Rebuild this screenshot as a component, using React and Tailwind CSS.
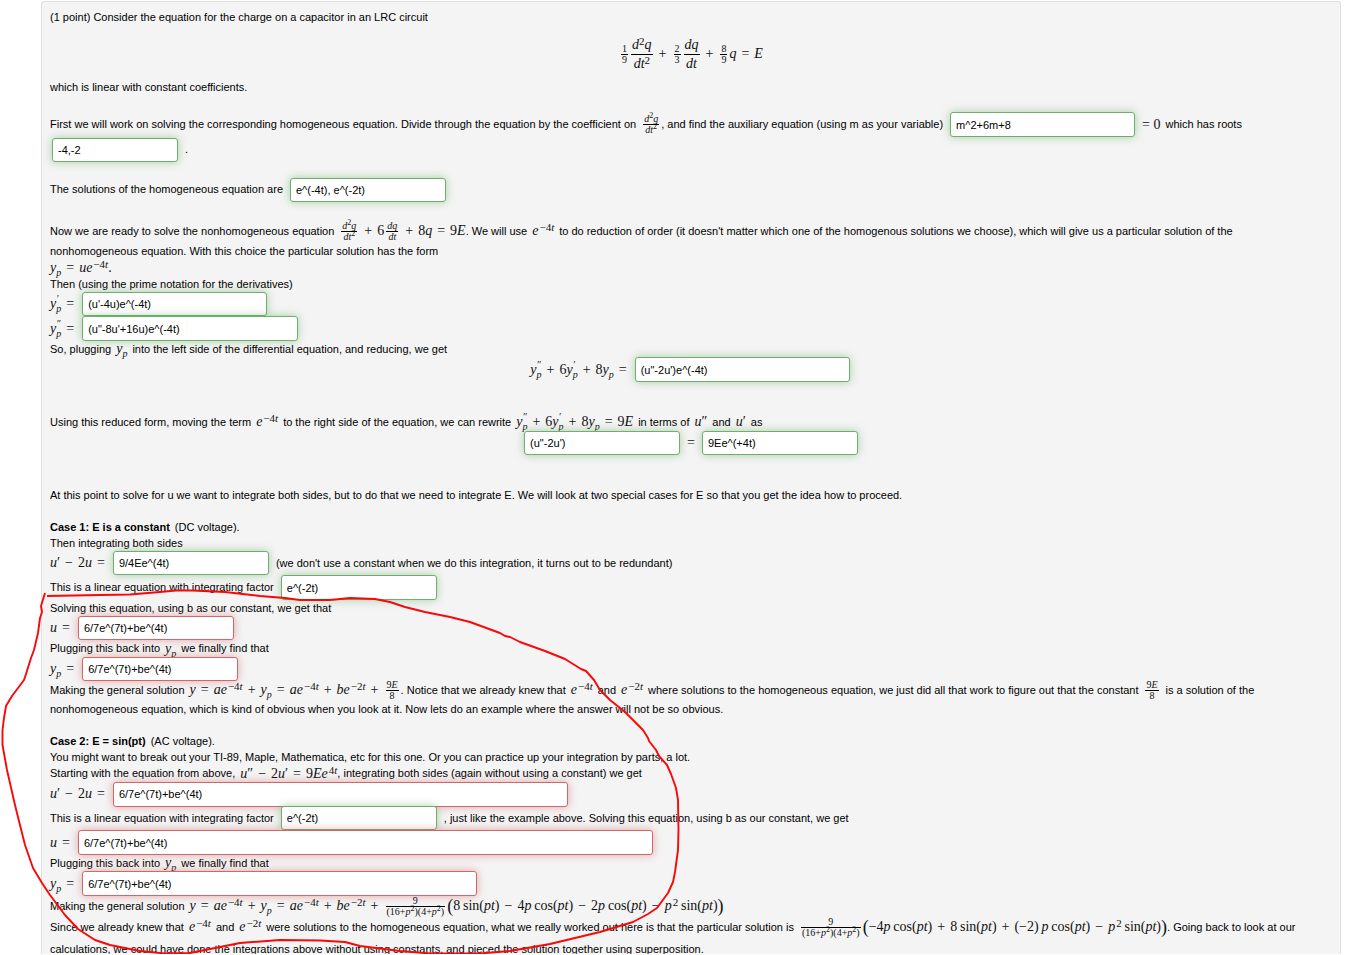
import React from "react";

const GREEN = "border-[#6fae6f] shadow-[0_0_8px_rgba(90,170,90,0.5)]";
const RED = "border-[#d0686a] shadow-[0_0_8px_rgba(210,90,90,0.5)]";

function Answer({ value, label, width, wrong, tall }) {
  return (
    <input
      type="text"
      aria-label={label}
      defaultValue={value}
      className={`${width} ${wrong ? RED : GREEN} ${tall ? "h-[25px]" : "h-6"} mx-[2px] shrink-0 rounded-[3px] border bg-white px-[5px] text-[11px] text-black outline-none`}
    />
  );
}

function Row({ h = "h-4", className = "", children }) {
  return <div className={`${h} ${className} flex items-center gap-[5px] whitespace-nowrap`}>{children}</div>;
}

/* Math directly followed by text, with no gap between them */
const Join = ({ children }) => <span className="inline-flex items-center">{children}</span>;

/* Math building blocks */
function M({ children }) {
  return (
    <span className="inline-flex items-center font-['Liberation_Serif',serif] text-[14px] leading-4 text-[#111]">
      {children}
    </span>
  );
}
const V = ({ children }) => <i>{children}</i>;
const Op = ({ children }) => <span className="mx-[5px]">{children}</span>;
const EndEq = () => <span className="ml-[5px] mr-px">=</span>;
const Sup = ({ children }) => <span className="mb-2 ml-px text-[11px] leading-3">{children}</span>;
const Exp = ({ n }) => (
  <>
    <V>e</V>
    <Sup>−{n}<V>t</V></Sup>
  </>
);
const Y = ({ prime }) => (
  <>
    <V>y</V>
    <span className="inline-flex flex-col text-[10px] leading-[10px]">
      <i>{prime || "\u00a0"}</i>
      <i>p</i>
    </span>
  </>
);
function Frac({ top, bottom, big }) {
  return (
    <span
      className={`${big ? "text-[14px] leading-[18px] mx-px" : "text-[10px] leading-[10px] mx-[2px]"} inline-flex flex-col items-center text-center`}
    >
      <span className="self-stretch border-b border-black px-px">{top}</span>
      <span className="px-px">{bottom}</span>
    </span>
  );
}
const Sq = ({ big }) => <span className={`${big ? "text-[11px]" : "text-[8px]"} relative -top-1 leading-none`}>2</span>;
const D2 = ({ big }) => (
  <Frac big={big} top={<><V>d</V><Sq big={big} /><V>q</V></>} bottom={<><V>dt</V><Sq big={big} /></>} />
);
const D1 = ({ big }) => <Frac big={big} top={<V>dq</V>} bottom={<V>dt</V>} />;
const Pt = () => <>(<V>pt</V>)</>;
const Big = ({ children }) => <span className="text-[18px]">{children}</span>;
const Coef = () => <Frac top="9" bottom={<>(16+<V>p</V><Sq />)(4+<V>p</V><Sq />)</>} />;
const PrimedSum = () => (
  <><Y prime="″" /><Op>+</Op>6<Y prime="′" /><Op>+</Op>8<Y /></>
);
const General = () => (
  <><V>y</V><Op>=</Op><V>a</V><Exp n="4" /><Op>+</Op><Y /><Op>=</Op><V>a</V><Exp n="4" /><Op>+</Op><V>b</V><Exp n="2" /><Op>+</Op></>
);

function RedMark() {
  return (
    <svg
      aria-hidden="true"
      width="690"
      height="954"
      viewBox="0 0 690 954"
      className="pointer-events-none absolute left-0 top-0"
      fill="none"
      stroke="#f90808"
      strokeWidth="1.9"
      strokeLinejoin="round"
    >
      <path d="M47 596 L100 595 L130 594.500 L160 592 L176 590.500 L192 590.500 L225 592 L260 596 L285 598 L300 600 L330 600 L350 598 L375 599 L390 602 L405 607 L425 612 L450 617 L470 622 L500 633 L505 636 L510 637 L520 642 L545 651 L565 659 L581 669 L586 671 L594 680 L600 690 L610 700 L625 712 L633 720 L643 730 L648 738 L649 741 L656 750 L659 756 L667 765 L671 774 L676 788 L678 800 L678.500 830 L678 850 L675 872 L673 882 L668 893 L657 908 L648 914 L633 922 L600 932 L550 944 L510 951 L480 953.500 L430 953.500 L400 951 L360 946 L345 942 L320 940.500 L280 940 L240 943 L205 950 L190 953 L165 953.500 L140 951 L110 945 L95 940 L78 929 L65 915 L50 895 L42 883 L36 873 L33 868 L25 845 L15 805 L7 770 L2.500 745 L2.500 730 L4 718 L6 706 L12 696 L24 680 L26 674 L31 658 L34 650 L38 633 L40 618 L42 612 L41 606 L45 593" />
    </svg>
  );
}

export default function App() {
  return (
    <div className="relative overflow-x-hidden bg-white pt-px font-['Liberation_Sans',Arial,sans-serif] text-[11px] text-black">
      <main className="ml-[41px] mr-2 rounded-t-[3px] border border-b-0 border-[#e0e0e0] bg-[#f4f4f4] px-2 pt-[6px]">
        <Row h="h-[18px]">(1 point) Consider the equation for the charge on a capacitor in an LRC circuit</Row>
        <Row h="h-10" className="mt-2 justify-center">
          <M>
            <Frac top="1" bottom="9" /><D2 big /><Op>+</Op><Frac top="2" bottom="3" /><D1 big /><Op>+</Op>
            <Frac top="8" bottom="9" /><V>q</V><Op>=</Op><V>E</V>
          </M>
        </Row>
        <Row h="h-[18px]" className="mt-1">which is linear with constant coefficients.</Row>

        <Row h="h-[25px]" className="mt-4">
          <span>First we will work on solving the corresponding homogeneous equation. Divide through the equation by the coefficient on</span>
          <Join>
            <M><D2 /></M>
            <span>, and find the auxiliary equation (using m as your variable)</span>
          </Join>
          <Answer label="Auxiliary equation" value="m^2+6m+8" width="w-[185px]" tall />
          <M>=&nbsp;0</M>
          <span>which has roots</span>
        </Row>
        <Row h="h-[25px]">
          <Answer label="Roots" value="-4,-2" width="w-[126px]" />
          <span>.</span>
        </Row>

        <Row h="h-[25px]" className="mt-[15px]">
          <span>The solutions of the homogeneous equation are</span>
          <Answer label="Homogeneous solutions" value="e^(-4t), e^(-2t)" width="w-[156px]" />
        </Row>

        <Row h="h-[22px]" className="mt-[18px]">
          <span>Now we are ready to solve the nonhomogeneous equation</span>
          <Join>
            <M><D2 /><Op>+</Op>6<D1 /><Op>+</Op>8<V>q</V><Op>=</Op>9<V>E</V></M>
            <span>. We will use</span>
          </Join>
          <M><Exp n="4" /></M>
          <span>to do reduction of order (it doesn't matter which one of the homogenous solutions we choose), which will give us a particular solution of the</span>
        </Row>
        <Row h="h-[18px]">nonhomogeneous equation. With this choice the particular solution has the form</Row>
        <Row><M><Y /><Op>=</Op><V>u</V><Exp n="4" />.</M></Row>
        <Row>Then (using the prime notation for the derivatives)</Row>
        <Row h="h-6">
          <M><Y prime="′" /><EndEq /></M>
          <Answer label="First derivative" value="(u'-4u)e^(-4t)" width="w-[185px]" />
        </Row>
        <Row h="h-[25px]">
          <M><Y prime="″" /><EndEq /></M>
          <Answer label="Second derivative" value={`(u"-8u'+16u)e^(-4t)`} width="w-[216px]" tall />
        </Row>
        <Row>
          <span>So, plugging</span><M><Y /></M>
          <span>into the left side of the differential equation, and reducing, we get</span>
        </Row>
        <Row h="h-[25px]" className="justify-center">
          <M><PrimedSum /><EndEq /></M>
          <Answer label="Left side" value={`(u"-2u')e^(-4t)`} width="w-[215px]" tall />
        </Row>

        <Row h="h-[18px]" className="mt-[31px]">
          <span>Using this reduced form, moving the term</span><M><Exp n="4" /></M>
          <span>to the right side of the equation, we can rewrite</span>
          <M><PrimedSum /><Op>=</Op>9<V>E</V></M><span>in terms of</span><M><V>u</V>″</M><span>and</span><M><V>u</V>′</M><span>as</span>
        </Row>
        <Row h="h-6" className="justify-center">
          <Answer label="Reduced left side" value={`(u"-2u')`} width="w-[156px]" />
          <M>=</M>
          <Answer label="Reduced right side" value="9Ee^(+4t)" width="w-[156px]" />
        </Row>

        <Row className="mt-8">At this point to solve for u we want to integrate both sides, but to do that we need to integrate E. We will look at two special cases for E so that you get the idea how to proceed.</Row>

        <Row className="mt-4"><b>Case 1: E is a constant</b><span>(DC voltage).</span></Row>
        <Row>Then integrating both sides</Row>
        <Row h="h-6">
          <M><V>u</V>′<Op>−</Op>2<V>u</V><EndEq /></M>
          <Answer label="Case 1 integrated" value="9/4Ee^(4t)" width="w-[156px]" />
          <span>(we don't use a constant when we do this integration, it turns out to be redundant)</span>
        </Row>
        <Row h="h-[25px]">
          <span>This is a linear equation with integrating factor</span>
          <Answer label="Case 1 integrating factor" value="e^(-2t)" width="w-[156px]" tall />
        </Row>
        <Row>Solving this equation, using b as our constant, we get that</Row>
        <Row h="h-6">
          <M><V>u</V><EndEq /></M>
          <Answer label="Case 1 u" value="6/7e^(7t)+be^(4t)" width="w-[156px]" wrong />
        </Row>
        <Row h="h-[17px]"><span>Plugging this back into</span><M><Y /></M><span>we finally find that</span></Row>
        <Row h="h-6">
          <M><Y /><EndEq /></M>
          <Answer label="Case 1 particular solution" value="6/7e^(7t)+be^(4t)" width="w-[156px]" wrong />
        </Row>
        <Row h="h-[18px]">
          <span>Making the general solution</span>
          <Join>
            <M><General /><Frac top={<>9<V>E</V></>} bottom="8" /></M>
            <span>. Notice that we already knew that</span>
          </Join>
          <M><Exp n="4" /></M><span>and</span><M><Exp n="2" /></M>
          <span>where solutions to the homogeneous equation, we just did all that work to figure out that the constant</span>
          <M><Frac top={<>9<V>E</V></>} bottom="8" /></M>
          <span>is a solution of the</span>
        </Row>
        <Row h="h-5">nonhomogeneous equation, which is kind of obvious when you look at it. Now lets do an example where the answer will not be so obvious.</Row>

        <Row className="mt-[14px]"><b>Case 2: E = sin(pt)</b><span>(AC voltage).</span></Row>
        <Row>You might want to break out your TI-89, Maple, Mathematica, etc for this one. Or you can practice up your integration by parts, a lot.</Row>
        <Row h="h-[17px]">
          <span>Starting with the equation from above,</span>
          <Join>
            <M><V>u</V>″<Op>−</Op>2<V>u</V>′<Op>=</Op>9<V>Ee</V><Sup>4<V>t</V></Sup></M>
            <span>, integrating both sides (again without using a constant) we get</span>
          </Join>
        </Row>
        <Row h="h-6">
          <M><V>u</V>′<Op>−</Op>2<V>u</V><EndEq /></M>
          <Answer label="Case 2 integrated" value="6/7e^(7t)+be^(4t)" width="w-[455px]" wrong tall />
        </Row>
        <Row h="h-6">
          <span>This is a linear equation with integrating factor</span>
          <Answer label="Case 2 integrating factor" value="e^(-2t)" width="w-[156px]" />
          <span>, just like the example above. Solving this equation, using b as our constant, we get</span>
        </Row>
        <Row h="h-[25px]">
          <M><V>u</V><EndEq /></M>
          <Answer label="Case 2 u" value="6/7e^(7t)+be^(4t)" width="w-[575px]" wrong tall />
        </Row>
        <Row><span>Plugging this back into</span><M><Y /></M><span>we finally find that</span></Row>
        <Row h="h-[25px]">
          <M><Y /><EndEq /></M>
          <Answer label="Case 2 particular solution" value="6/7e^(7t)+be^(4t)" width="w-[395px]" wrong tall />
        </Row>
        <Row h="h-5">
          <span>Making the general solution</span>
          <M>
            <General /><Coef /><Big>(</Big>8{"\u2009"}sin<Pt /><Op>−</Op>4<V>p</V>{"\u2009"}cos<Pt /><Op>−</Op>2<V>p</V>{"\u2009"}cos<Pt /><Op>−</Op>
            <V>p</V><Sup>2</Sup>{"\u2009"}sin<Pt /><Big>)</Big>
          </M>
        </Row>
        <Row h="h-[22px]">
          <span>Since we already knew that</span><M><Exp n="4" /></M><span>and</span><M><Exp n="2" /></M>
          <span>were solutions to the homogeneous equation, what we really worked out here is that the particular solution is</span>
          <Join>
            <M>
              <Coef /><Big>(</Big>−4<V>p</V>{"\u2009"}cos<Pt /><Op>+</Op>8{"\u2009"}sin<Pt /><Op>+</Op>(−2){"\u2009"}<V>p</V>{"\u2009"}cos<Pt /><Op>−</Op>
              <V>p</V><Sup>2</Sup>{"\u2009"}sin<Pt /><Big>)</Big>
            </M>
            <span>. Going back to look at our</span>
          </Join>
        </Row>
        <div className="h-4 overflow-hidden whitespace-nowrap leading-[22px]">
          calculations, we could have done the integrations above without using constants, and pieced the solution together using superposition.
        </div>
      </main>
      <RedMark />
    </div>
  );
}
